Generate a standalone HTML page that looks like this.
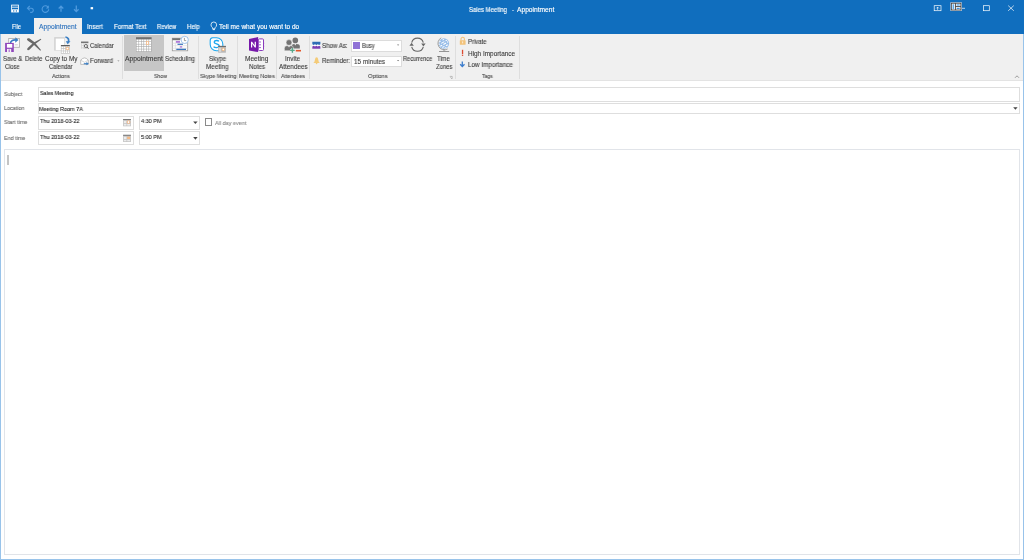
<!DOCTYPE html>
<html><head><meta charset="utf-8">
<style>
*{margin:0;padding:0;box-sizing:border-box}
html,body{width:1024px;height:560px;overflow:hidden;background:#fff;font-family:"Liberation Sans",sans-serif}
.a{position:absolute}
.t{position:absolute;white-space:pre;line-height:10px;height:10px;will-change:transform;transform-origin:0 0;-webkit-text-stroke:0.1px currentColor}
.sep{position:absolute;top:36px;width:1px;height:43px;background:#dedede}
.box{position:absolute;border:1px solid #dedede;background:#fff}
</style></head><body>
<div class="a" style="left:0;top:0;width:1024px;height:34px;background:#106ebe"></div>
<div class="a" style="left:0;top:34px;width:1px;height:526px;background:#98c3ea"></div>
<div class="a" style="left:1023px;top:34px;width:1px;height:526px;background:#98c3ea"></div>
<div class="a" style="left:0;top:559px;width:1024px;height:1px;background:#98c3ea"></div>
<div class="a" style="left:34px;top:18px;width:48px;height:16px;background:#f0f0f0"></div>
<div class="a" style="left:1px;top:34px;width:1022px;height:46px;background:#f0f0f0"></div>
<div class="a" style="left:1px;top:80px;width:1022px;height:1px;background:#e3e3e3"></div>
<div class="sep" style="left:122px"></div>
<div class="sep" style="left:198px"></div>
<div class="sep" style="left:237px"></div>
<div class="sep" style="left:276px"></div>
<div class="sep" style="left:309px"></div>
<div class="sep" style="left:455px"></div>
<div class="sep" style="left:519px"></div>
<div class="a" style="left:124px;top:35px;width:40px;height:36px;background:#c6c6c6"></div>
<div class="box" style="left:351px;top:40px;width:51px;height:12px;border-color:#dcdcdc"></div>
<div class="box" style="left:351px;top:56px;width:51px;height:11px;border-color:#dcdcdc"></div>
<div class="a" style="left:353px;top:42px;width:7px;height:7px;background:#8f72d6"></div>
<div class="box" style="left:38px;top:87px;width:982px;height:15px"></div>
<div class="box" style="left:38px;top:103px;width:982px;height:11px"></div>
<div class="box" style="left:38px;top:116px;width:96px;height:14px"></div>
<div class="box" style="left:38px;top:131px;width:96px;height:14px"></div>
<div class="box" style="left:139px;top:116px;width:61px;height:14px"></div>
<div class="box" style="left:139px;top:131px;width:61px;height:14px"></div>
<div class="a" style="left:205px;top:118px;width:7px;height:8px;border:1px solid #8a8a8a;background:#fff"></div>
<div class="box" style="left:4px;top:149px;width:1016px;height:406px;border-color:#e1e4e9"></div>
<div class="a" style="left:7px;top:155px;width:2px;height:10px;background:#c4c4c4"></div>
<div class="t" style="left:468.90px;top:4.90px;font-size:6.5px;color:#ffffff;transform:scaleX(0.9212);letter-spacing:0.000px;-webkit-text-stroke:0.14px currentColor">Sales Meeting</div>
<div class="t" style="left:511.60px;top:4.90px;font-size:6.5px;color:#ffffff;transform:scaleX(0.9000);letter-spacing:0.000px;-webkit-text-stroke:0.14px currentColor">-</div>
<div class="t" style="left:517.30px;top:4.90px;font-size:6.5px;color:#ffffff;transform:scaleX(1.0221);letter-spacing:0.000px;-webkit-text-stroke:0.14px currentColor">Appointment</div>
<div class="t" style="left:11.60px;top:22.07px;font-size:6.5px;color:#ffffff;transform:scaleX(0.8657);letter-spacing:0.000px;-webkit-text-stroke:0.14px currentColor">File</div>
<div class="t" style="left:38.75px;top:21.80px;font-size:6.6px;color:#2f73bd;transform:scaleX(1.0151);letter-spacing:0.000px;-webkit-text-stroke:0.12px currentColor">Appointment</div>
<div class="t" style="left:86.90px;top:21.80px;font-size:6.5px;color:#ffffff;transform:scaleX(0.9635);letter-spacing:0.000px;-webkit-text-stroke:0.14px currentColor">Insert</div>
<div class="t" style="left:113.70px;top:21.50px;font-size:6.5px;color:#ffffff;transform:scaleX(0.9448);letter-spacing:0.000px;-webkit-text-stroke:0.14px currentColor">Format Text</div>
<div class="t" style="left:156.60px;top:21.50px;font-size:6.5px;color:#ffffff;transform:scaleX(0.9066);letter-spacing:0.000px;-webkit-text-stroke:0.14px currentColor">Review</div>
<div class="t" style="left:186.90px;top:21.50px;font-size:6.5px;color:#ffffff;transform:scaleX(0.9525);letter-spacing:0.000px;-webkit-text-stroke:0.14px currentColor">Help</div>
<div class="t" style="left:219.30px;top:21.80px;font-size:6.5px;color:#ffffff;transform:scaleX(1.0001);letter-spacing:0.000px;-webkit-text-stroke:0.14px currentColor">Tell me what you want to do</div>
<div class="t" style="left:2.50px;top:53.70px;font-size:6.4px;color:#3a3a3a;transform:scaleX(0.9371);letter-spacing:0.000px">Save &amp;</div>
<div class="t" style="left:5.00px;top:62.10px;font-size:6.4px;color:#3a3a3a;transform:scaleX(0.8937);letter-spacing:0.000px">Close</div>
<div class="t" style="left:25.00px;top:53.70px;font-size:6.4px;color:#3a3a3a;transform:scaleX(0.9382);letter-spacing:0.000px">Delete</div>
<div class="t" style="left:44.75px;top:53.70px;font-size:6.4px;color:#3a3a3a;transform:scaleX(1.0069);letter-spacing:0.000px">Copy to My</div>
<div class="t" style="left:49.40px;top:62.10px;font-size:6.4px;color:#3a3a3a;transform:scaleX(0.9084);letter-spacing:0.000px">Calendar</div>
<div class="t" style="left:89.75px;top:40.50px;font-size:6.4px;color:#3a3a3a;transform:scaleX(0.9196);letter-spacing:0.000px">Calendar</div>
<div class="t" style="left:89.75px;top:55.90px;font-size:6.4px;color:#3a3a3a;transform:scaleX(0.9735);letter-spacing:0.000px">Forward</div>
<div class="t" style="left:125.00px;top:53.60px;font-size:6.4px;color:#3a3a3a;transform:scaleX(1.0552);letter-spacing:0.000px">Appointment</div>
<div class="t" style="left:164.75px;top:53.60px;font-size:6.4px;color:#3a3a3a;transform:scaleX(0.9433);letter-spacing:0.000px">Scheduling</div>
<div class="t" style="left:208.75px;top:53.60px;font-size:6.4px;color:#3a3a3a;transform:scaleX(0.9612);letter-spacing:0.000px">Skype</div>
<div class="t" style="left:206.00px;top:62.10px;font-size:6.4px;color:#3a3a3a;transform:scaleX(0.9814);letter-spacing:0.000px">Meeting</div>
<div class="t" style="left:244.50px;top:53.60px;font-size:6.4px;color:#3a3a3a;transform:scaleX(1.0245);letter-spacing:0.000px">Meeting</div>
<div class="t" style="left:248.90px;top:62.10px;font-size:6.4px;color:#3a3a3a;transform:scaleX(0.9607);letter-spacing:0.000px">Notes</div>
<div class="t" style="left:285.00px;top:53.60px;font-size:6.4px;color:#3a3a3a;transform:scaleX(0.9860);letter-spacing:0.000px">Invite</div>
<div class="t" style="left:278.50px;top:62.10px;font-size:6.4px;color:#3a3a3a;transform:scaleX(0.9970);letter-spacing:0.000px">Attendees</div>
<div class="t" style="left:321.75px;top:40.90px;font-size:6.4px;color:#3a3a3a;transform:scaleX(0.9644);letter-spacing:0.000px">Show As:</div>
<div class="t" style="left:321.75px;top:55.90px;font-size:6.4px;color:#3a3a3a;transform:scaleX(0.9511);letter-spacing:0.000px">Reminder:</div>
<div class="t" style="left:361.75px;top:40.50px;font-size:6.4px;color:#3a3a3a;transform:scaleX(0.8826);letter-spacing:0.000px">Busy</div>
<div class="t" style="left:353.75px;top:57.05px;font-size:6.4px;color:#3a3a3a;transform:scaleX(0.9931);letter-spacing:0.000px">15 minutes</div>
<div class="t" style="left:402.50px;top:53.60px;font-size:6.4px;color:#3a3a3a;transform:scaleX(0.8841);letter-spacing:0.000px">Recurrence</div>
<div class="t" style="left:437.10px;top:53.60px;font-size:6.4px;color:#3a3a3a;transform:scaleX(0.9126);letter-spacing:0.000px">Time</div>
<div class="t" style="left:435.50px;top:62.10px;font-size:6.4px;color:#3a3a3a;transform:scaleX(0.9251);letter-spacing:0.000px">Zones</div>
<div class="t" style="left:468.00px;top:36.75px;font-size:6.4px;color:#3a3a3a;transform:scaleX(0.9343);letter-spacing:0.000px">Private</div>
<div class="t" style="left:468.00px;top:48.90px;font-size:6.4px;color:#3a3a3a;transform:scaleX(1.0035);letter-spacing:0.000px">High Importance</div>
<div class="t" style="left:468.00px;top:60.00px;font-size:6.4px;color:#3a3a3a;transform:scaleX(0.9855);letter-spacing:0.000px">Low Importance</div>
<div class="t" style="left:52.25px;top:70.80px;font-size:6.0px;color:#4a4a4a;transform:scaleX(0.9021);letter-spacing:0.000px">Actions</div>
<div class="t" style="left:153.75px;top:70.91px;font-size:6.0px;color:#4a4a4a;transform:scaleX(0.8612);letter-spacing:0.000px">Show</div>
<div class="t" style="left:199.75px;top:70.77px;font-size:6.0px;color:#4a4a4a;transform:scaleX(0.9212);letter-spacing:0.000px">Skype Meeting</div>
<div class="t" style="left:238.90px;top:70.82px;font-size:6.0px;color:#4a4a4a;transform:scaleX(0.9267);letter-spacing:0.000px">Meeting Notes</div>
<div class="t" style="left:280.75px;top:70.82px;font-size:6.0px;color:#4a4a4a;transform:scaleX(0.8882);letter-spacing:0.000px">Attendees</div>
<div class="t" style="left:368.40px;top:70.80px;font-size:6.0px;color:#4a4a4a;transform:scaleX(0.9479);letter-spacing:0.000px">Options</div>
<div class="t" style="left:482.00px;top:70.75px;font-size:6.0px;color:#4a4a4a;transform:scaleX(0.8600);letter-spacing:-0.058px">Tags</div>
<div class="t" style="left:3.75px;top:89.30px;font-size:6.2px;color:#6a6a6a;transform:scaleX(0.8844);letter-spacing:0.000px;-webkit-text-stroke:0.1px currentColor">Subject</div>
<div class="t" style="left:3.75px;top:102.55px;font-size:6.2px;color:#6a6a6a;transform:scaleX(0.8767);letter-spacing:0.000px;-webkit-text-stroke:0.1px currentColor">Location</div>
<div class="t" style="left:3.75px;top:117.40px;font-size:6.2px;color:#6a6a6a;transform:scaleX(0.8878);letter-spacing:0.000px;-webkit-text-stroke:0.1px currentColor">Start time</div>
<div class="t" style="left:3.75px;top:133.05px;font-size:6.2px;color:#6a6a6a;transform:scaleX(0.8748);letter-spacing:0.000px;-webkit-text-stroke:0.1px currentColor">End time</div>
<div class="t" style="left:40.00px;top:88.30px;font-size:6.2px;color:#262626;transform:scaleX(0.8600);letter-spacing:-0.019px;-webkit-text-stroke:0.12px currentColor">Sales Meeting</div>
<div class="t" style="left:39.40px;top:103.90px;font-size:6.2px;color:#262626;transform:scaleX(0.8850);letter-spacing:0.000px;-webkit-text-stroke:0.12px currentColor">Meeting Room 7A</div>
<div class="t" style="left:40.00px;top:115.61px;font-size:6.2px;color:#262626;transform:scaleX(0.8971);letter-spacing:0.000px;-webkit-text-stroke:0.12px currentColor">Thu 2018-03-22</div>
<div class="t" style="left:40.00px;top:132.20px;font-size:6.2px;color:#262626;transform:scaleX(0.8971);letter-spacing:0.000px;-webkit-text-stroke:0.12px currentColor">Thu 2018-03-22</div>
<div class="t" style="left:140.80px;top:116.30px;font-size:6.2px;color:#262626;transform:scaleX(0.8913);letter-spacing:0.000px;-webkit-text-stroke:0.12px currentColor">4:30 PM</div>
<div class="t" style="left:140.80px;top:132.20px;font-size:6.2px;color:#262626;transform:scaleX(0.8913);letter-spacing:0.000px;-webkit-text-stroke:0.12px currentColor">5:00 PM</div>
<div class="t" style="left:215.30px;top:118.30px;font-size:6.2px;color:#8a8a8a;transform:scaleX(0.8878);letter-spacing:0.000px;-webkit-text-stroke:0.12px currentColor">All day event</div>
<svg class="a" style="left:0;top:0" width="1024" height="560" viewBox="0 0 1024 560">
<g fill="none" stroke="#fff" stroke-width="0.85">
 <rect x="11.6" y="5.1" width="6.9" height="6.9"/>
 <line x1="12" y1="7.2" x2="18.1" y2="7.2"/>
</g>
<rect x="12" y="9.3" width="6.1" height="2.7" fill="#fff"/>
<rect x="13.2" y="10.3" width="1.1" height="1.3" fill="#106ebe"/><rect x="15.8" y="10.3" width="1.1" height="1.3" fill="#106ebe"/>
<g fill="none" stroke="#4f9ade" stroke-width="1.1">
 <path d="M28 8.2 H31.2 A2.1 2.1 0 0 1 31.2 12.4 H30.2"/>
 <path d="M29.7 6 L27.5 8.2 L29.7 10.4"/>
 <path d="M47.9 6.9 A3.3 3.3 0 1 0 48.7 9.3"/>
 <path d="M61 11.8 V6.2 M58.7 8.5 L61 6.2 L63.3 8.5" stroke-width="1.3"/>
 <path d="M76.3 5.6 V11.6 M74 9.3 L76.3 11.6 L78.6 9.3" stroke-width="1.3"/>
</g>
<path d="M48.8 5.3 V8.4 H45.9 Z" fill="#4f9ade"/>
<rect x="90.6" y="7.1" width="2.5" height="2.2" fill="#fff"/>
<g fill="none" stroke="#fff" stroke-width="0.7">
 <rect x="934.2" y="5.7" width="6.8" height="5"/>
 <path d="M937.6 9.8 V7.2 M936.3 8.4 L937.6 7.1 L938.9 8.4"/>
 <rect x="983.5" y="5.7" width="5.8" height="5"/>
 <path d="M1008.2 5.6 L1013.8 10.8 M1013.8 5.6 L1008.2 10.8"/>
 <line x1="962" y1="8.3" x2="965" y2="8.3"/>
</g>
<rect x="950.4" y="2.3" width="11.4" height="8.6" fill="#dfe9f3"/>
<rect x="951.3" y="3.2" width="9.6" height="6.8" fill="#f4f4f4" stroke="#3a3632" stroke-width="0.8"/>
<line x1="955.5" y1="3.2" x2="955.5" y2="10" stroke="#3a3632" stroke-width="0.8"/>
<line x1="955.5" y1="6.5" x2="960.9" y2="6.5" stroke="#3a3632" stroke-width="0.8"/>
<rect x="952.6" y="4.3" width="1.5" height="4.7" fill="#5aa8ea"/>
<rect x="956.7" y="4.3" width="3" height="1.3" fill="#5aa8ea"/>
<rect x="956.7" y="7.8" width="3" height="1.2" fill="#3f8fd8"/>
<g fill="none" stroke="#fff" stroke-width="0.8">
 <path d="M212.6 27.8 Q210.9 26.4 211 24.8 A2.8 2.8 0 0 1 216.6 24.8 Q216.7 26.4 215 27.8 V28.8 H212.6 Z"/>
</g>
<rect x="212.7" y="29.2" width="2.2" height="0.9" fill="#fff"/>
<rect x="8.7" y="38.5" width="10.7" height="8.8" fill="#fff" stroke="#b0b0b0" stroke-width="0.9"/>
<rect x="14.6" y="44.4" width="3.2" height="0.9" fill="#cacaca"/>
<path d="M10.4 43.4 C10.6 40.6 13.2 39.6 16.4 40" fill="none" stroke="#3b7fc4" stroke-width="1.6"/>
<path d="M15.4 37.3 L18.5 40.1 L15.2 42.8 Z" fill="#3b7fc4"/>
<rect x="5.1" y="42.9" width="8.7" height="9.1" fill="#9048bb"/>
<rect x="6.9" y="44" width="5.4" height="3.7" fill="#fff"/>
<rect x="7" y="48.9" width="4.2" height="3.1" fill="#f6f0fa"/>
<rect x="8.7" y="49.4" width="0.9" height="2.6" fill="#9048bb"/>
<path d="M27 39.6 C27 38.2 28.6 37.9 29.6 38.5 L34.6 42.3 L41 50.1 L40.3 50.8 L33.2 44.3 L28.2 40.9 C27.6 40.6 27 40.3 27 39.6 Z" fill="#6a6a6a"/>
<path d="M40.8 38.8 L41.3 39.5 L34.8 44.3 L29.7 49.5 C28.9 50.4 27.4 50.6 27.2 49.6 C27 48.8 27.6 48.2 28.2 47.6 L33.3 42.7 Z" fill="#6a6a6a"/>
<rect x="54.2" y="37.1" width="10.6" height="13.5" fill="#d2d2d2"/>
<rect x="55.7" y="38.6" width="8.5" height="11.5" fill="#fff"/>
<path d="M65.4 37 C68.2 37.4 69.4 39.6 68.2 42.2" fill="none" stroke="#3b7fc4" stroke-width="1.7"/>
<path d="M65.8 41.3 L70.5 41.3 L67.7 44.3 Z" fill="#3b7fc4"/>
<rect x="60.9" y="46" width="8.9" height="7.6" fill="#bdbdbd"/><rect x="61.50" y="46.60" width="1.48" height="1.73" fill="#fff"/><rect x="63.58" y="46.60" width="1.48" height="1.73" fill="#fff"/><rect x="65.65" y="46.60" width="1.48" height="1.73" fill="#fff"/><rect x="67.72" y="46.60" width="1.48" height="1.73" fill="#fff"/><rect x="61.50" y="48.93" width="1.48" height="1.73" fill="#fff"/><rect x="63.58" y="48.93" width="1.48" height="1.73" fill="#fff"/><rect x="65.65" y="48.93" width="1.48" height="1.73" fill="#fff"/><rect x="67.72" y="48.93" width="1.48" height="1.73" fill="#fff"/><rect x="61.50" y="51.27" width="1.48" height="1.73" fill="#fff"/><rect x="63.58" y="51.27" width="1.48" height="1.73" fill="#fff"/><rect x="65.65" y="51.27" width="1.48" height="1.73" fill="#fff"/><rect x="67.72" y="51.27" width="1.48" height="1.73" fill="#fff"/>
<rect x="60.9" y="45" width="8.9" height="1.1" fill="#5e5e5e"/>
<rect x="66.2" y="47.3" width="2.5" height="2.4" fill="#fff" stroke="#f5b985" stroke-width="0.7"/>
<rect x="81.1" y="42.4" width="7.2" height="6.4" fill="#cfcfcf"/>
<rect x="81" y="41.6" width="7.4" height="1.2" fill="#5c5c5c"/>
<rect x="81.8" y="43.5" width="1.6" height="1.5" fill="#f2f2f2"/><rect x="81.8" y="45.6" width="1.6" height="1.5" fill="#f2f2f2"/><rect x="81.8" y="47.6" width="1.6" height="1" fill="#f2f2f2"/><rect x="84" y="43.5" width="1.6" height="1" fill="#f2f2f2"/><rect x="86.3" y="43.5" width="1.4" height="1" fill="#f2f2f2"/>
<circle cx="85.9" cy="46" r="1.5" fill="#fff" stroke="#4a4a4a" stroke-width="0.8"/>
<line x1="87" y1="47.1" x2="88.5" y2="48.6" stroke="#4a4a4a" stroke-width="1"/>
<path d="M80.7 60.2 Q84.5 55.6 88.3 60.2 V64.4 H80.7 Z" fill="#fff" stroke="#a8a8a8" stroke-width="0.7"/>
<path d="M80.7 60.2 L84.5 62.3 L88.3 60.2" fill="none" stroke="#b8b8b8" stroke-width="0.6"/>
<path d="M83.8 63.7 H87.4" stroke="#3b7fc4" stroke-width="1.1"/>
<path d="M86.4 62.1 L88.9 63.7 L86.4 65.3 Z" fill="#3b7fc4"/>
<path d="M117.3 60.4 H119.5 L118.4 61.6 Z" fill="#808080"/>
<rect x="136" y="39" width="15.6" height="12.8" fill="#a6a6a6"/><rect x="136.55" y="39.55" width="1.96" height="1.90" fill="#fff"/><rect x="139.06" y="39.55" width="1.96" height="1.90" fill="#fff"/><rect x="141.57" y="39.55" width="1.96" height="1.90" fill="#fff"/><rect x="144.08" y="39.55" width="1.96" height="1.90" fill="#fff"/><rect x="146.58" y="39.55" width="1.96" height="1.90" fill="#fff"/><rect x="149.09" y="39.55" width="1.96" height="1.90" fill="#fff"/><rect x="136.55" y="42.00" width="1.96" height="1.90" fill="#fff"/><rect x="139.06" y="42.00" width="1.96" height="1.90" fill="#fff"/><rect x="141.57" y="42.00" width="1.96" height="1.90" fill="#fff"/><rect x="144.08" y="42.00" width="1.96" height="1.90" fill="#fff"/><rect x="146.58" y="42.00" width="1.96" height="1.90" fill="#fff"/><rect x="149.09" y="42.00" width="1.96" height="1.90" fill="#fff"/><rect x="136.55" y="44.45" width="1.96" height="1.90" fill="#fff"/><rect x="139.06" y="44.45" width="1.96" height="1.90" fill="#fff"/><rect x="141.57" y="44.45" width="1.96" height="1.90" fill="#fff"/><rect x="144.08" y="44.45" width="1.96" height="1.90" fill="#fff"/><rect x="146.58" y="44.45" width="1.96" height="1.90" fill="#fff"/><rect x="149.09" y="44.45" width="1.96" height="1.90" fill="#fff"/><rect x="136.55" y="46.90" width="1.96" height="1.90" fill="#fff"/><rect x="139.06" y="46.90" width="1.96" height="1.90" fill="#fff"/><rect x="141.57" y="46.90" width="1.96" height="1.90" fill="#fff"/><rect x="144.08" y="46.90" width="1.96" height="1.90" fill="#fff"/><rect x="146.58" y="46.90" width="1.96" height="1.90" fill="#fff"/><rect x="149.09" y="46.90" width="1.96" height="1.90" fill="#fff"/><rect x="136.55" y="49.35" width="1.96" height="1.90" fill="#fff"/><rect x="139.06" y="49.35" width="1.96" height="1.90" fill="#fff"/><rect x="141.57" y="49.35" width="1.96" height="1.90" fill="#fff"/><rect x="144.08" y="49.35" width="1.96" height="1.90" fill="#fff"/><rect x="146.58" y="49.35" width="1.96" height="1.90" fill="#fff"/><rect x="149.09" y="49.35" width="1.96" height="1.90" fill="#fff"/>
<rect x="136" y="37.2" width="15.6" height="1.9" fill="#707070"/>
<rect x="146.4" y="41.3" width="2.2" height="3.2" fill="#fff" stroke="#f5b986" stroke-width="0.8"/>
<rect x="172.3" y="38.2" width="15.4" height="12.6" fill="#fff" stroke="#9a9a9a" stroke-width="0.8"/>
<rect x="172.3" y="38.2" width="8" height="2" fill="#737373"/>
<line x1="172.5" y1="43.2" x2="187.5" y2="43.2" stroke="#d6d6d6" stroke-width="0.6"/>
<line x1="172.5" y1="45.7" x2="187.5" y2="45.7" stroke="#d6d6d6" stroke-width="0.6"/>
<line x1="172.5" y1="48.2" x2="187.5" y2="48.2" stroke="#d6d6d6" stroke-width="0.6"/>
<line x1="175.3" y1="40.5" x2="175.3" y2="50.5" stroke="#d6d6d6" stroke-width="0.6"/>
<rect x="176" y="40.9" width="4" height="1.9" fill="#b07ad8"/>
<rect x="177.5" y="43.7" width="5.5" height="1.2" fill="#3a76bd"/>
<rect x="179.8" y="46.2" width="2.4" height="1.4" fill="#b07ad8"/>
<rect x="176.3" y="48.7" width="9.7" height="1.3" fill="#3a76bd"/>
<circle cx="184.7" cy="39.9" r="3.6" fill="#fff" stroke="#8ab8e8" stroke-width="0.8"/>
<path d="M184.4 37.9 V40.6 H186.2" fill="none" stroke="#777" stroke-width="0.7"/>
<path d="M212.6 37.7 H216.6 A6.2 6.2 0 0 1 222.8 43.9 V48 A2.7 2.7 0 0 1 220.1 50.7 H216.4 A6.2 6.2 0 0 1 210.2 44.5 V40.4 A2.7 2.7 0 0 1 212.6 37.7 Z" fill="#fff" stroke="#1ea8ef" stroke-width="1.1"/>
<path d="M218.9 41.4 C218.2 40.3 214.5 40 214.2 42.1 C213.9 44.2 219.4 43.6 219.2 46 C219 48.1 214.6 48 213.6 46.6" fill="none" stroke="#1ea8ef" stroke-width="1.4"/>
<rect x="218.2" y="45.9" width="7.7" height="6.8" fill="#b8b8b8"/>
<rect x="218.2" y="45.9" width="7.7" height="1.1" fill="#6e6e6e"/>
<rect x="219" y="47.7" width="2.2" height="4.2" fill="#d8d8d8"/>
<circle cx="223.3" cy="49.4" r="1.3" fill="#fff" stroke="#f2a862" stroke-width="0.8"/>
<rect x="258.3" y="38.9" width="5.2" height="11.6" rx="1" fill="#fff" stroke="#8a3cbc" stroke-width="1"/>
<rect x="263.2" y="42.6" width="0.9" height="1.4" fill="#8a3cbc"/><rect x="263.2" y="45.6" width="0.9" height="1.4" fill="#8a3cbc"/>
<rect x="258" y="41.5" width="3" height="1" fill="#a062cc"/>
<rect x="258" y="44.3" width="3" height="1" fill="#a062cc"/>
<rect x="258" y="47.1" width="3" height="1" fill="#a062cc"/>
<path d="M258.1 37.1 V52.1 L249 50.6 V39 Z" fill="#7719aa"/>
<path d="M251 47.4 V41.8 H252.1 L254.7 45.5 V41.8 H255.9 V47.4 H254.8 L252.2 43.7 V47.4 Z" fill="#fff"/>
<circle cx="295.3" cy="40.4" r="2.8" fill="#737373"/>
<path d="M291.8 48.4 V46.2 Q291.8 43.9 294 43.9 H296.6 Q299.8 43.9 299.8 46.2 V48.4 Z" fill="#737373"/>
<path d="M294.2 43.7 L295.3 45.5 L296.4 43.7 Z" fill="#f0f0f0"/>
<circle cx="289" cy="42.5" r="2.9" fill="#737373" stroke="#f0f0f0" stroke-width="0.5"/>
<path d="M284.4 50.8 V48.2 Q284.4 45.8 286.6 45.8 H291.4 Q293.4 45.8 293.4 48.2 V50.8 Z" fill="#737373" stroke="#f0f0f0" stroke-width="0.5"/>
<path d="M287.8 45.6 L289 47.6 L290.2 45.6 Z" fill="#f0f0f0"/>
<path d="M292.4 48 V52.8 M290 50.4 H294.8" stroke="#f0f0f0" stroke-width="2.2"/>
<path d="M292.4 48.1 V52.7 M290.1 50.4 H294.7" stroke="#56a88a" stroke-width="1.4"/>
<rect x="295.8" y="49.9" width="5.2" height="1.6" fill="#e2572b"/>
<rect x="312.3" y="41.8" width="8.1" height="7" fill="#fff"/>
<path d="M312.3 41.8 H320.4 V44.2 L319.1 45.1 L317.8 44.2 L316.4 45.1 L315 44.2 L313.6 45.1 L312.3 44.2 Z" fill="#2f6db5"/>
<path d="M312.3 48.8 H320.4 V46.5 L319.1 45.7 L317.8 46.5 L316.4 45.7 L315 46.5 L313.6 45.7 L312.3 46.5 Z" fill="#7c3fb2"/>
<path d="M313.3 63 Q314.8 62 315 59.6 Q315.2 57.3 316.6 57.3 Q318 57.3 318.2 59.6 Q318.4 62 319.9 63 Z" fill="#f4cb78"/>
<circle cx="316.6" cy="63.5" r="0.8" fill="#f4cb78"/>
<path d="M397 44.6 H399.2 L398.1 45.8 Z" fill="#777"/>
<path d="M397 60.1 H399.2 L398.1 61.3 Z" fill="#777"/>
<path d="M411.7 42.6 A6 6 0 0 1 423.3 42.6" fill="none" stroke="#666" stroke-width="1.1"/>
<path d="M423.3 46.8 A6 6 0 0 1 411.7 46.8" fill="none" stroke="#666" stroke-width="1.1"/>
<path d="M409.4 45.8 L411.6 42.8 L413.8 45.8 Z" fill="#666"/>
<path d="M421.2 43.6 L423.4 46.6 L425.6 43.6 Z" fill="#666"/>
<defs><clipPath id="gc"><circle cx="443.9" cy="43.5" r="5.1"/></clipPath></defs>
<circle cx="443.9" cy="43.5" r="5.2" fill="#98bde8"/>
<g clip-path="url(#gc)" fill="#fff" transform="rotate(-28 443.9 43.5)">
<rect x="440" y="39.2" width="2" height="1.2"/><rect x="444.2" y="39.4" width="1.8" height="1"/>
<rect x="438.6" y="41.4" width="1.6" height="1.1"/><rect x="441.6" y="41.6" width="3.6" height="1"/><rect x="446.6" y="41.4" width="1.6" height="1.1"/>
<rect x="439.4" y="43.6" width="2.2" height="1.1"/><rect x="443" y="43.6" width="3" height="1.1"/><rect x="447.2" y="43.4" width="1.2" height="1"/>
<rect x="440.6" y="45.8" width="2.4" height="1"/><rect x="444.6" y="45.8" width="2.2" height="1.1"/>
<rect x="442" y="47.7" width="2.4" height="0.9"/>
</g>
<path d="M441.2 37.8 A6.3 6.3 0 0 0 447.6 49" fill="none" stroke="#8a8a8a" stroke-width="0.8"/>
<line x1="444" y1="49.2" x2="444" y2="51.2" stroke="#8a8a8a" stroke-width="0.8"/>
<line x1="439" y1="51.5" x2="449.2" y2="51.5" stroke="#8a8a8a" stroke-width="0.9"/>
<path d="M449.8 76.4 H452.2 V78.8 M450.4 77.4 L452 79" fill="none" stroke="#888" stroke-width="0.5"/>
<path d="M461 40.6 V39 A1.7 1.7 0 0 1 464.4 39 V40.6" fill="none" stroke="#f2c27a" stroke-width="1.1"/>
<rect x="459.8" y="40.2" width="5.8" height="4.5" rx="0.5" fill="#f2c27a"/>
<rect x="462.4" y="41.4" width="0.7" height="2" fill="#fff"/>
<rect x="461.9" y="49.8" width="1.3" height="4.4" fill="#dc4a30"/>
<rect x="461.9" y="54.8" width="1.3" height="1.1" fill="#dc4a30"/>
<path d="M462.3 61.5 V66.3 M460.2 64.2 L462.3 66.6 L464.5 64.2" fill="none" stroke="#3b7ccc" stroke-width="1.3"/>
<path d="M1015 77.8 L1017 75.8 L1019 77.8" fill="none" stroke="#777" stroke-width="0.7"/>
<rect x="123.1" y="119" width="7.8" height="7.3" fill="#c2c2c2"/>
<rect x="123.1" y="119" width="7.8" height="1" fill="#7a7a7a"/>
<rect x="123.9" y="120.9" width="2.6" height="2.3" fill="#ececec"/><rect x="123.9" y="123.9" width="2.6" height="1.7" fill="#ececec"/><rect x="127.2" y="123.9" width="2.9" height="1.7" fill="#ececec"/>
<circle cx="128.5" cy="122.1" r="1.4" fill="#fff" stroke="#f5b07a" stroke-width="0.8"/>
<rect x="123.1" y="134.8" width="7.8" height="7.2" fill="#c2c2c2"/>
<rect x="123.1" y="134.8" width="7.8" height="1" fill="#7a7a7a"/>
<rect x="123.9" y="136.7" width="2.6" height="2.3" fill="#ececec"/><rect x="123.9" y="139.7" width="2.6" height="1.6" fill="#ececec"/><rect x="127.2" y="139.7" width="2.9" height="1.6" fill="#ececec"/>
<rect x="127.2" y="136.7" width="2.9" height="2.3" fill="#f6ba86"/>
<path d="M193.2 121.4 H197.6 L195.4 124 Z" fill="#444"/>
<path d="M193.2 137.1 H197.6 L195.4 139.7 Z" fill="#444"/>
<path d="M1013.2 107.2 H1017.6 L1015.4 109.8 Z" fill="#444"/>
</svg>
</body></html>
